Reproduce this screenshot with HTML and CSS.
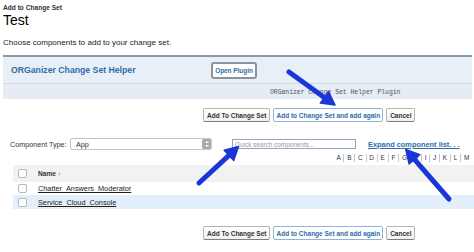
FILE: index.html
```html
<!DOCTYPE html>
<html>
<head>
<meta charset="utf-8">
<link rel="stylesheet" href="styles.css">
</head>
<body>
<div class="page">
  <div class="crumb">Add to Change Set</div>
  <h1 class="title">Test</h1>
  <p class="intro">Choose components to add to your change set.</p>

  <div class="panel">
    <div class="panel-head">
      <span class="panel-title">ORGanizer Change Set Helper</span>
      <span class="plugin-btn">Open Plugin</span>
    </div>
    <div class="panel-foot">ORGanizer Change Set Helper Plugin</div>
  </div>

  <div class="btn-row">
    <span class="btn">Add To Change Set</span>
    <span class="btn btn-blue">Add to Change Set and add again</span>
    <span class="btn">Cancel</span>
  </div>

  <div class="filter-row">
    <span class="label">Component Type:</span>
    <span class="select"><span class="select-val">App</span><span class="select-arrow"><svg width="6" height="8" viewBox="0 0 6 8"><path d="M1 3 L3 1 L5 3 Z M1 5 L3 7 L5 5 Z" fill="#fff"/></svg></span></span>
    <span class="search">Quick search components...</span>
    <span class="expand">Expand component list. . .</span>
  </div>

  <div class="alpha">
    <span>A</span><span>B</span><span>C</span><span>D</span><span>E</span><span>F</span><span>G</span><span>H</span><span>I</span><span>J</span><span>K</span><span>L</span><span>M</span>
  </div>

  <div class="list">
    <div class="row row-head"><span class="cb"></span><span class="name-h">Name <span class="sort">↑</span></span></div>
    <div class="row"><span class="cb"></span><span class="link">Chatter_Answers_Moderator</span></div>
    <div class="row row-alt"><span class="cb"></span><span class="link">Service_Cloud_Console</span></div>
  </div>

  <div class="btn-row btn-row-bottom">
    <span class="btn">Add To Change Set</span>
    <span class="btn btn-blue">Add to Change Set and add again</span>
    <span class="btn">Cancel</span>
  </div>

  <svg class="arrows" width="474" height="252" viewBox="0 0 474 252">
    <g stroke="#1a36d6" stroke-width="5" stroke-linecap="round">
      <line x1="289" y1="72" x2="325" y2="98"/>
      <line x1="199" y1="183" x2="229.5" y2="154.8"/>
      <line x1="449" y1="199" x2="414" y2="158.8"/>
    </g>
    <g fill="#1a36d6" stroke="#1a36d6" stroke-width="1.5" stroke-linejoin="round">
      <polygon points="335,105 320.3,103.1 328.5,91.7"/>
      <polygon points="238.5,146.5 233.7,160.5 224.2,150.2"/>
      <polygon points="405.8,149.5 419.7,154.7 409.1,163.9"/>
    </g>
  </svg>
</div>
</body>
</html>
```
FILE: styles.css
```css
* { box-sizing: border-box; }
html, body { margin: 0; padding: 0; background: #fff; }
body { font-family: "Liberation Sans", Arial, sans-serif; color: #222; }
.page { position: relative; width: 474px; height: 252px; overflow: hidden; padding-top: 4px; }

.crumb { font-size: 6.6px; font-weight: bold; line-height: 8px; padding-left: 3px; color: #333; }
.title { margin: 0; font-size: 14px; font-weight: normal; line-height: 16px; padding-left: 3px; color: #000; }
.intro { margin: 10px 0 0; font-size: 8px; line-height: 10px; padding-left: 3px; color: #222; }

.panel { margin: 7px 2px 0 3px; border-top: 2px solid #8b97a8; background: #e8eef6; }
.panel-head { height: 27px; display: flex; align-items: center; justify-content: space-between; padding: 0 0 0 8px; border-bottom: 1px solid #d2dbe6; background: #e9eff7; }
.panel-title { font-size: 8.7px; font-weight: bold; color: #2f6da8; }
.plugin-btn { margin-right: 215px; height: 17px; width: 46px; display: flex; align-items: center; justify-content: center; background: #fff; border: 2.5px solid #8e939b; border-radius: 3px; font-size: 6.4px; font-weight: bold; color: #2f6da8; }
.panel-foot { height: 15px; padding: 5px 0 0 267px; font-family: "Liberation Mono", "Courier New", monospace; font-size: 6.4px; line-height: 8px; color: #555; background: #e6ecf4; }

.btn-row { display: flex; gap: 3px; padding-left: 203px; margin-top: 9px; }
.btn-row-bottom { margin-top: 17px; }
.btn { height: 14px; display: flex; align-items: center; padding: 0 3px; font-size: 6.5px; font-weight: bold; color: #333; background: linear-gradient(#fff, #f1f1f1); border: 1px solid #b5b5b5; border-bottom-color: #7f7f7f; border-radius: 2px; white-space: nowrap; }
.btn-blue { color: #2f6da8; border-color: #8fb3d9; background: #fff; padding: 0 2px; }

.filter-row { display: flex; align-items: center; margin-top: 16px; padding-left: 10px; height: 12px; }
.label { font-size: 7.2px; color: #333; width: 60px; }
.select { width: 142px; height: 12px; border: 1px solid #c4c4c4; border-radius: 2px; display: flex; align-items: center; justify-content: space-between; background: #fff; }
.select-val { font-size: 7.2px; padding-left: 5px; color: #333; }
.select-arrow { width: 9px; height: 10px; background: #a9a9a9; border-radius: 2px; display: flex; align-items: center; justify-content: center; }
.search { margin-left: 20px; width: 124px; height: 10px; border: 1px solid #8ea8c8; display: flex; align-items: center; padding-left: 2px; font-size: 6.4px; color: #9a9a9a; background: #fff; }
.expand { margin-left: 12px; font-size: 7.4px; font-weight: bold; color: #2f6da8; text-decoration: underline; }

.alpha { display: flex; justify-content: flex-end; margin-top: 4px; height: 8px; padding-right: 2px; }
.alpha span { font-size: 6.4px; line-height: 8px; color: #333; padding: 0 2.8px; border-left: 1px solid #c8c8c8; }
.alpha span:first-child { border-left: none; }

.list { margin: 3px 0 0 13px; }
.row { display: flex; align-items: center; height: 13px; background: #fff; }
.row-head { height: 17px; background: #f2f2f2; }
.row-alt { height: 14px; background: #e3effa; }
.cb { width: 9px; height: 9px; margin: 0 11px 0 5px; border: 1px solid #b9b9b9; border-radius: 2px; background: #fff; }
.name-h { font-size: 6.6px; font-weight: bold; color: #333; }
.sort { font-weight: normal; color: #666; font-size: 6px; }
.link { font-size: 7.3px; color: #222; text-decoration: underline; }

.arrows { position: absolute; left: 0; top: 0; pointer-events: none; }
```
